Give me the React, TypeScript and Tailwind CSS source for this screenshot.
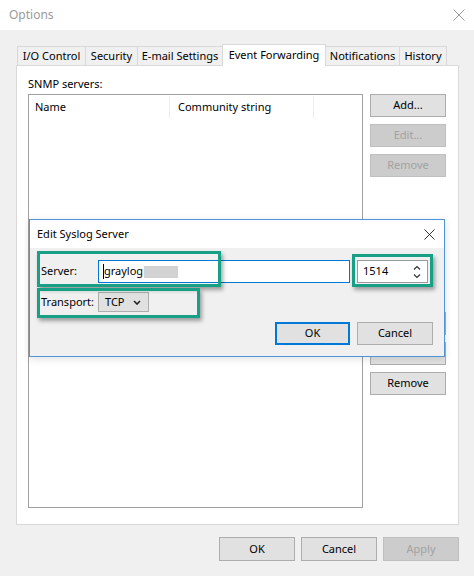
const tabs = [
  { label: "I/O Control", w: "w-[69px]" },
  { label: "Security", w: "w-[53px]" },
  { label: "E-mail Settings", w: "w-[86px]" },
  { label: "Event Forwarding", w: "w-[104px]", active: true },
  { label: "Notifications", w: "w-[75px]" },
  { label: "History", w: "w-[48px]" },
];

export default function App() {
  return (
    <div className="relative h-[576px] w-[474px] overflow-hidden bg-[#f0f0f0] text-[11px] text-black [font-family:'Noto_Sans',sans-serif]">
      {/* window title */}
      <div className="flex h-[30px] items-center justify-between bg-white pl-[9px] pr-[9px]">
        <span className="text-[12px] text-[#9b9b9b]">Options</span>
        <XIcon className="h-[12px] w-[12px] stroke-[#9b9b9b]" />
      </div>

      <div className="pl-[16px] pt-[14px]">
        <div className="flex h-[21px] items-end pl-[2px]">
          {tabs.map((t) => (
            <div
              key={t.label}
              className={
                t.active
                  ? `relative z-10 -mb-px -ml-px flex h-[22px] ${t.w} items-start justify-center border border-b-0 border-[#d9d9d9] bg-white pt-[2px]`
                  : `-ml-px flex h-[19px] ${t.w} items-center justify-center border border-b-0 border-[#d9d9d9] bg-[#f0f0f0]`
              }
            >
              {t.label}
            </div>
          ))}
        </div>

        <div className="h-[460px] w-[443px] border border-[#d9d9d9] bg-white pl-[11px] pt-[10px]">
          <div className="leading-[16px]">SNMP servers:</div>
          <div className="mt-[2px] flex gap-[7px]">
            <div className="h-[414px] w-[335px] border border-[#a0a0a0]">
              <div className="flex h-[24px] items-center">
                <div className="w-[140px] pl-[6px]">Name</div>
                <div className="h-[22px] w-px bg-[#ececec]" />
                <div className="w-[143px] pl-[8px]">Community string</div>
                <div className="h-[22px] w-px bg-[#ececec]" />
              </div>
            </div>
            <div className="flex flex-col gap-[7px]">
              <Btn>Add...</Btn>
              <Btn disabled>Edit...</Btn>
              <Btn disabled>Remove</Btn>
              <div className="h-[121px]" />
              {/* these two sit under the dialog */}
              <Btn>{""}</Btn>
              <Btn>{""}</Btn>
              <Btn>Remove</Btn>
            </div>
          </div>
        </div>

        <div className="mt-[12px] flex w-[443px] justify-end gap-[6px]">
          <Btn tall>OK</Btn>
          <Btn tall>Cancel</Btn>
          <Btn tall disabled>Apply</Btn>
        </div>
      </div>

      {/* Edit Syslog Server dialog */}
      <div className="absolute left-[29px] top-[219px] flex h-[138px] w-[416px] flex-col border border-[#4f93d8] bg-[#f0f0f0] shadow-[0_2px_8px_rgba(0,0,0,0.12)]">
        <div className="flex h-[28px] items-center justify-between bg-white pl-[7px] pr-[9px]">
          <span>Edit Syslog Server</span>
          <XIcon className="h-[11px] w-[11px] stroke-[#222]" />
        </div>
        <div className="flex flex-col pl-[11px] pr-[11px] pt-[12px]">
          <div className="flex items-center">
            <div className="w-[57px]">Server:</div>
            <div className="flex h-[23px] w-[252px] items-center border border-[#0078d7] bg-white pl-[4px]">
              <span className="h-[15px] w-px bg-black" />
              <span>graylog</span>
              <span className="ml-[1px] h-[12px] w-[34px] bg-[#d2d2d2]" />
            </div>
            <div className="ml-[7px] flex h-[23px] w-[71px] items-center justify-between border border-[#9a9a9a] bg-white pl-[5px] pr-[6px]">
              <span>1514</span>
              <svg viewBox="0 0 8 16" className="h-[16px] w-[8px] fill-none stroke-[#333]" strokeWidth="1.2">
                <path d="M1 5.5 4 2.5 7 5.5M1 10.5 4 13.5 7 10.5" />
              </svg>
            </div>
          </div>
          <div className="mt-[9px] flex items-center">
            <div className="w-[57px]">Transport:</div>
            <div className="flex h-[20px] w-[51px] items-center justify-between border border-[#adadad] bg-[#e1e1e1] pl-[6px] pr-[7px]">
              <span>TCP</span>
              <svg viewBox="0 0 8 5" className="h-[5px] w-[8px] fill-none stroke-[#222]" strokeWidth="1.6">
                <path d="M1 1 4 4 7 1" />
              </svg>
            </div>
          </div>
          <div className="mt-[10px] flex justify-end gap-[7px]">
            <button className="flex h-[23px] w-[75px] items-center justify-center border-2 border-[#0078d7] bg-[#e1e1e1]">
              OK
            </button>
            <Btn>Cancel</Btn>
          </div>
        </div>
      </div>

      {/* annotation boxes */}
      <div className="absolute left-[37px] top-[251px] h-[36px] w-[184px] border-[3px] border-[#18a086] shadow-[2px_3px_4px_rgba(0,0,0,0.35)]" />
      <div className="absolute left-[37px] top-[288px] h-[30px] w-[163px] border-[3px] border-[#18a086] shadow-[2px_3px_4px_rgba(0,0,0,0.35)]" />
      <div className="absolute left-[352px] top-[254px] h-[33px] w-[81px] border-[3px] border-[#18a086] shadow-[2px_3px_4px_rgba(0,0,0,0.35)]" />
    </div>
  );
}

function Btn({ children, disabled, tall }: { children: React.ReactNode; disabled?: boolean; tall?: boolean }) {
  return (
    <button
      className={
        (tall ? "h-[24px] " : "h-[23px] ") +
        (disabled
          ? "w-[76px] border border-[#bfbfbf] bg-[#cccccc] text-[#a2a2a2]"
          : "w-[76px] border border-[#adadad] bg-[#e1e1e1] text-black")
      }
    >
      {children}
    </button>
  );
}

function XIcon({ className }: { className: string }) {
  return (
    <svg viewBox="0 0 12 12" className={`fill-none ${className}`} strokeWidth="1">
      <path d="M0.5 0.5 11.5 11.5M11.5 0.5 0.5 11.5" />
    </svg>
  );
}
